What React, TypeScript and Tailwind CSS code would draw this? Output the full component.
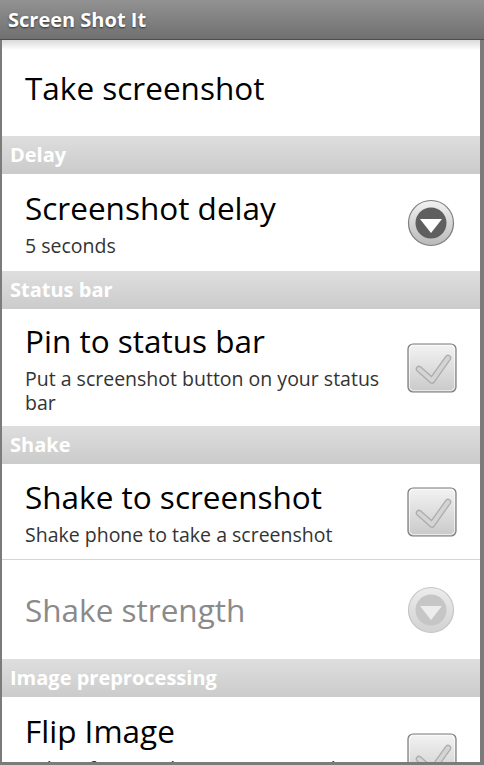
type Row = {
  title: string;
  summary?: string;
  widget?: "list" | "check";
  disabled?: boolean;
  height: string;
};

function ListIcon({ disabled }: { disabled?: boolean }) {
  const id = disabled ? "ringD" : "ring";
  return (
    <svg width="48" height="48" viewBox="0 0 48 48" className="mr-[2px]">
      <defs>
        <linearGradient id={id} x1="0" y1="0" x2="0" y2="1">
          <stop offset="0" stopColor={disabled ? "#ececec" : "#f2f2f2"} />
          <stop offset="1" stopColor={disabled ? "#d2d2d2" : "#b9b9b9"} />
        </linearGradient>
      </defs>
      <circle
        cx="24"
        cy="24"
        r="22.5"
        fill={`url(#${id})`}
        stroke={disabled ? "#c6c6c6" : "#7d7d7d"}
        strokeWidth="1.2"
      />
      <circle cx="24" cy="24" r="15.5" fill={disabled ? "#c6c6c6" : "#5f5f5f"} />
      <path d="M13 20 H35 L24 34 Z" fill={disabled ? "#ededed" : "#ffffff"} />
    </svg>
  );
}

function CheckIcon() {
  return (
    <svg width="50" height="50" viewBox="0 0 50 50">
      <defs>
        <linearGradient id="box" x1="0" y1="0" x2="0" y2="1">
          <stop offset="0" stopColor="#f3f3f3" />
          <stop offset="1" stopColor="#c9c9c9" />
        </linearGradient>
      </defs>
      <rect x="1" y="1" width="48" height="48" rx="5" fill="url(#box)" stroke="#7a7a7a" strokeWidth="1.2" />
      <rect x="2.5" y="2.5" width="45" height="45" rx="4" fill="none" stroke="#ffffff" strokeOpacity="0.6" />
      <path
        d="M12 26 L25 37.5 L41 15"
        fill="none"
        stroke="#acacac"
        strokeWidth="6.5"
        strokeLinecap="round"
        strokeLinejoin="round"
      />
      <path
        d="M12 26 L25 37.5 L41 15"
        fill="none"
        stroke="#d4d4d4"
        strokeWidth="4"
        strokeLinecap="round"
        strokeLinejoin="round"
      />
    </svg>
  );
}

function Header({ label }: { label: string }) {
  return (
    <div className="h-[38px] shrink-0 flex items-center pl-[8px] bg-[linear-gradient(to_bottom,#dedede,#cbcbcb)] text-white font-bold text-[20px] leading-none">
      {label}
    </div>
  );
}

function Pref({ row }: { row: Row }) {
  return (
    <div className={`${row.height} shrink-0 flex items-center pl-[23px] pr-[23px]`}>
      <div className="flex-1 min-w-0 pr-[16px]">
        <div
          className={`text-[31.5px] leading-[40px] ${row.disabled ? "text-[#8a8a8a]" : "text-black"}`}
        >
          {row.title}
        </div>
        {row.summary && (
          <div className="mt-[6px] text-[19.5px] leading-[24px] text-[#333333]">{row.summary}</div>
        )}
      </div>
      {row.widget === "list" && <ListIcon disabled={row.disabled} />}
      {row.widget === "check" && <CheckIcon />}
    </div>
  );
}

export default function App() {
  return (
    <div className="w-[484px] h-[765px] flex flex-col overflow-hidden bg-[#7b7b7b] font-['Open_Sans',sans-serif]">
      {/* Title bar */}
      <div className="h-[40px] shrink-0 flex items-center pl-[8px] bg-[linear-gradient(to_bottom,#929292,#707070)] border-b border-[#4e4e4e]">
        <span className="text-white font-bold text-[20px] leading-none [text-shadow:0_1px_2px_rgba(0,0,0,0.6)]">
          Screen Shot It
        </span>
      </div>

      {/* Preference list */}
      <div className="flex-1 min-h-0 ml-[2px] mr-[4px] mb-[3px] bg-white flex flex-col overflow-hidden">
        <div className="h-[96px] shrink-0 flex items-center pl-[23px] bg-[linear-gradient(to_bottom,#d9d9d9,#ffffff_10px)]">
          <span className="text-[31.5px] leading-[40px] text-black">Take screenshot</span>
        </div>

        <Header label="Delay" />
        <Pref row={{ title: "Screenshot delay", summary: "5 seconds", widget: "list", height: "h-[97px]" }} />

        <Header label="Status bar" />
        <Pref
          row={{
            title: "Pin to status bar",
            summary: "Put a screenshot button on your status bar",
            widget: "check",
            height: "h-[117px]",
          }}
        />

        <Header label="Shake" />
        <Pref
          row={{
            title: "Shake to screenshot",
            summary: "Shake phone to take a screenshot",
            widget: "check",
            height: "h-[95px]",
          }}
        />
        <div className="h-px shrink-0 bg-[#d4d4d4]" />
        <Pref row={{ title: "Shake strength", widget: "list", disabled: true, height: "h-[99px]" }} />

        <Header label="Image preprocessing" />
        <Pref
          row={{
            title: "Flip Image",
            summary: "Select if screenshot image is upside down",
            widget: "check",
            height: "h-[122px]",
          }}
        />
      </div>
    </div>
  );
}
